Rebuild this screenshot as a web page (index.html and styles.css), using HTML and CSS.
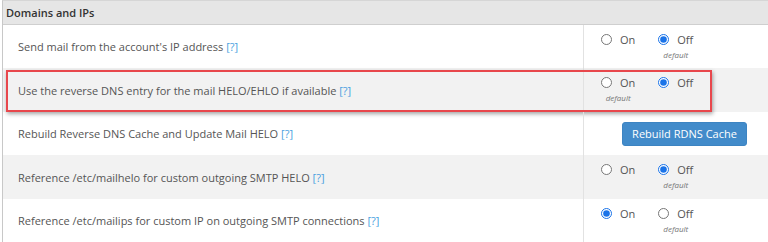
FILE: index.html
```html
<!DOCTYPE html>
<html lang="en">
<head>
    <meta charset="UTF-8">
    <meta name="viewport" content="width=device-width, initial-scale=1.0">
    <title>Exim Configuration - Domains and IPs</title>
    <link rel="stylesheet" href="styles.css">
</head>
<body>
    <div class="settings">
        <div class="section-head">Domains and IPs</div>

        <div class="row">
            <div class="label">Send mail from the account's IP address <a href="#" class="help">[?]</a></div>
            <div class="value">
                <label class="option"><span class="choice"><input type="radio" name="ipaddr"> On</span><span class="default"></span></label>
                <label class="option"><span class="choice"><input type="radio" name="ipaddr" checked> Off</span><span class="default">default</span></label>
            </div>
        </div>

        <div class="row alt">
            <div class="label">Use the reverse DNS entry for the mail HELO/EHLO if available <a href="#" class="help">[?]</a></div>
            <div class="value">
                <label class="option"><span class="choice"><input type="radio" name="rdns"> On</span><span class="default">default</span></label>
                <label class="option"><span class="choice"><input type="radio" name="rdns" checked> Off</span><span class="default"></span></label>
            </div>
            <div class="highlight"></div>
        </div>

        <div class="row">
            <div class="label">Rebuild Reverse DNS Cache and Update Mail HELO <a href="#" class="help">[?]</a></div>
            <div class="value value-button">
                <button class="btn">Rebuild RDNS Cache</button>
            </div>
        </div>

        <div class="row alt">
            <div class="label">Reference /etc/mailhelo for custom outgoing SMTP HELO <a href="#" class="help">[?]</a></div>
            <div class="value">
                <label class="option"><span class="choice"><input type="radio" name="mailhelo"> On</span><span class="default"></span></label>
                <label class="option"><span class="choice"><input type="radio" name="mailhelo" checked> Off</span><span class="default">default</span></label>
            </div>
        </div>

        <div class="row">
            <div class="label">Reference /etc/mailips for custom IP on outgoing SMTP connections <a href="#" class="help">[?]</a></div>
            <div class="value">
                <label class="option"><span class="choice"><input type="radio" name="mailips" checked> On</span><span class="default"></span></label>
                <label class="option"><span class="choice"><input type="radio" name="mailips"> Off</span><span class="default">default</span></label>
            </div>
        </div>
    </div>
</body>
</html>
```

FILE: styles.css
```css
body {
    font-family: "Open Sans", Arial, sans-serif;
    margin: 0;
    background-color: #fff;
    color: #555;
    overflow: hidden;
}
.settings {
    margin-left: 2px;
    width: 800px;
    border-left: 1px solid #c8c8c8;
    border-top: 1px solid #d6d6d6;
}
.section-head {
    height: 23px;
    line-height: 23px;
    padding-left: 3px;
    background-color: #e6e6e6;
    border-bottom: 1px solid #cfcfcf;
    font-size: 11px;
    font-weight: 600;
    color: #333;
}
.row {
    position: relative;
    display: grid;
    grid-template-columns: 580px 1fr;
    height: 43px;
}
.row.alt {
    height: 44px;
    background-color: #f2f2f2;
}
.label {
    display: flex;
    align-items: center;
    padding-left: 15px;
    font-size: 11px;
    white-space: pre;
}
.help {
    color: #4a9fe0;
    text-decoration: none;
}
.value {
    display: flex;
    align-items: flex-start;
    border-left: 1px solid #e2e2e2;
    padding: 6px 0 0 17px;
}
.option {
    display: flex;
    flex-direction: column;
    align-items: center;
    margin-right: 23px;
    font-size: 11px;
    color: #555;
}
.choice {
    display: flex;
    align-items: center;
    height: 16px;
}
.choice input {
    width: 11px;
    height: 11px;
    margin: 0 8px 0 0;
    accent-color: #1a73e8;
}
.default {
    height: 12px;
    line-height: 12px;
    margin-top: 2px;
    font-size: 8px;
    font-style: italic;
    color: #777;
}
.value-button {
    align-items: center;
    padding: 0 0 0 38px;
}
.btn {
    width: 125px;
    height: 24px;
    padding: 0;
    border: 1px solid #3d84c2;
    border-radius: 3px;
    background-color: #428bca;
    color: #fff;
    font-family: "Open Sans", Arial, sans-serif;
    font-size: 11px;
    cursor: pointer;
}
.highlight {
    position: absolute;
    left: 3px;
    top: 2px;
    width: 702px;
    height: 38px;
    border: 2px solid #e8474c;
    box-shadow: 1px 2px 4px rgba(0, 0, 0, 0.35);
    pointer-events: none;
}
```
